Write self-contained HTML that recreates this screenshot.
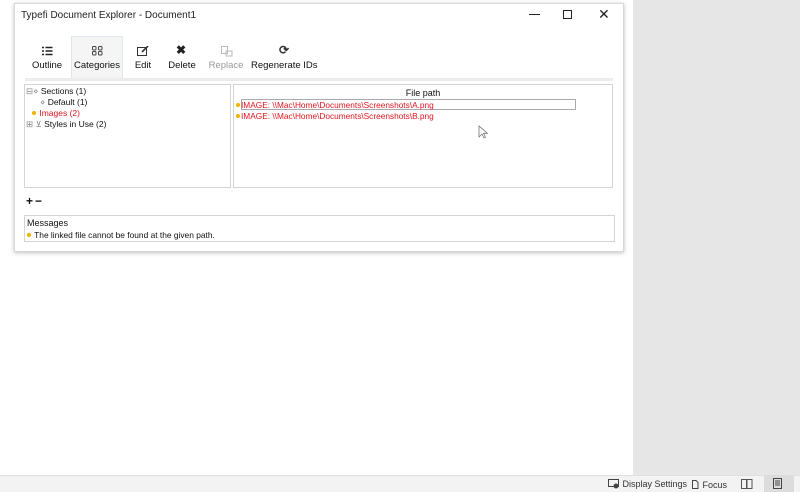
<!DOCTYPE html>
<html><head><meta charset="utf-8"><style>
*{margin:0;padding:0;box-sizing:border-box}
body{width:800px;height:492px;position:relative;overflow:hidden;background:#fff;font-family:"Liberation Sans",sans-serif;font-size:9px;color:#111}
.a{position:absolute}
.dlg{left:14px;top:3px;width:610px;height:249px;background:#fff;border:1px solid #d8d8d8;box-shadow:0 1px 4px rgba(0,0,0,.25)}
.tb{font-size:9.5px;text-align:center;white-space:nowrap}
.red{color:#e0141e}
.dot{display:inline-block;width:4px;height:4px;border-radius:50%;background:#f0b400;margin-right:1px;vertical-align:1px}
</style></head><body>
<div class="a" style="left:633px;top:0;width:167px;height:475px;background:#e6e6e6"></div>
<div class="a" style="left:0;top:475px;width:800px;height:17px;background:#f3f3f3;border-top:1px solid #e0e0e0"></div>
<div class="a" style="left:608px;top:479px;font-size:9px;color:#333;white-space:nowrap">
<svg width="12" height="10" style="vertical-align:-2px"><rect x="0.5" y="0.5" width="10" height="7" fill="none" stroke="#444"/><circle cx="8" cy="7" r="2.5" fill="#444"/></svg> Display Settings</div>
<div class="a" style="left:690px;top:479px;font-size:9px;color:#333">
<svg width="10" height="11" style="vertical-align:-2px"><path d="M2.5 1.5h3.5l2 2v6h-5.5z" fill="none" stroke="#444"/></svg> Focus</div>
<svg class="a" style="left:741px;top:478px" width="12" height="11"><path d="M0.5 1.5h5v9h-5zM6 1.5h5v9h-5z" fill="none" stroke="#555"/></svg>
<div class="a" style="left:764px;top:475px;width:30px;height:17px;background:#dcdcdc"></div>
<svg class="a" style="left:773px;top:478px" width="10" height="12"><rect x="0.5" y="0.5" width="8" height="10" fill="none" stroke="#444"/><path d="M2 3h5M2 5h5M2 7h5" stroke="#444"/></svg>

<div class="a dlg">
 <div class="a" style="left:6px;top:6px;font-size:10px;color:#222">Typefi Document Explorer - Document1</div>
 <div class="a" style="left:514px;top:10px;width:11px;height:1px;background:#222"></div>
 <div class="a" style="left:548px;top:6px;width:9px;height:9px;border:1px solid #222"></div>
 <div class="a" style="left:583px;top:2px;font-size:14px;color:#222">&#10005;</div>

 <div class="a" style="left:56px;top:32px;width:52px;height:44px;background:#f5f5f5;border:1px solid #dfe6ee"></div>
 <svg class="a" style="left:27px;top:42px" width="11" height="10"><path d="M0 1.5h2M0 5h2M0 8.5h2M3.5 1.5h7M3.5 5h7M3.5 8.5h7" stroke="#222" stroke-width="1.4"/></svg>
 <div class="a tb" style="left:16px;top:56px;width:32px">Outline</div>
 <svg class="a" style="left:77px;top:42px" width="11" height="10"><rect x=".5" y=".5" width="3.5" height="3.5" rx="1" fill="none" stroke="#444"/><rect x="6.5" y=".5" width="3.5" height="3.5" rx="1" fill="none" stroke="#444"/><rect x=".5" y="5.5" width="3.5" height="3.5" rx="1" fill="none" stroke="#444"/><rect x="6.5" y="5.5" width="3.5" height="3.5" rx="1" fill="none" stroke="#444"/></svg>
 <div class="a tb" style="left:58px;top:56px;width:48px">Categories</div>
 <svg class="a" style="left:122px;top:42px" width="12" height="10"><rect x=".5" y="1.5" width="9" height="8" fill="none" stroke="#333"/><path d="M5 6l6-6" stroke="#333" stroke-width="1.6"/></svg>
 <div class="a tb" style="left:116px;top:56px;width:24px">Edit</div>
 <div class="a" style="left:161px;top:39px;font-size:12px;font-weight:bold;color:#222">&#10006;</div>
 <div class="a tb" style="left:150px;top:56px;width:34px">Delete</div>
 <svg class="a" style="left:206px;top:42px" width="12" height="11"><rect x=".5" y=".5" width="6" height="7" fill="none" stroke="#bbb"/><path d="M5 5h6v5H5z" fill="none" stroke="#bbb"/></svg>
 <div class="a tb" style="left:193px;top:56px;width:36px;color:#999">Replace</div>
 <div class="a" style="left:264px;top:39px;font-size:12px;font-weight:bold;color:#333">&#10227;</div>
 <div class="a tb" style="left:236px;top:56px;width:66px">Regenerate IDs</div>
 <div class="a" style="left:10px;top:74px;width:588px;height:3px;background:#ececec"></div>

 <div class="a" style="left:9px;top:80px;width:207px;height:104px;border:1px solid #d4d4d4">
  <div class="a" style="left:1px;top:1px;line-height:11px;font-size:8.5px;white-space:nowrap">
   <div><span style="color:#888">&#8863;&#8900;</span> Sections (1)</div>
   <div style="padding-left:14px"><span style="color:#888">&#8900;</span> Default (1)</div>
   <div style="padding-left:6px" class="red"><span class="dot"></span> Images (2)</div>
   <div><span style="color:#888">&#8862; &#8891;</span> Styles in Use (2)</div>
  </div>
 </div>
 <div class="a" style="left:218px;top:80px;width:380px;height:104px;border:1px solid #d4d4d4">
  <div class="a" style="left:0;top:3px;width:378px;text-align:center;font-size:9px">File path</div>
  <div class="a" style="left:7px;top:14px;width:335px;height:11px;border:1px solid #aaa"></div>
  <div class="a red" style="left:2px;top:15px;line-height:11px;font-size:8.3px;white-space:nowrap">
   <div><span class="dot"></span>IMAGE: \\Mac\Home\Documents\Screenshots\A.png</div>
   <div><span class="dot"></span>IMAGE: \\Mac\Home\Documents\Screenshots\B.png</div>
  </div>
  <svg class="a" style="left:244px;top:40px" width="10" height="14"><path d="M1 1v11l3-3 2 4 1.5-.7-2-4h4z" fill="#fff" stroke="#777" stroke-width=".8"/></svg>
 </div>
 <div class="a" style="left:11px;top:190px;font-size:12px;font-weight:bold;letter-spacing:2px">+&#8722;</div>
 <div class="a" style="left:9px;top:211px;width:591px;height:27px;border:1px solid #d4d4d4">
  <div class="a" style="left:2px;top:2px;font-size:9px">Messages</div>
  <div class="a" style="left:2px;top:14px;font-size:8.4px;white-space:nowrap"><span class="dot"></span> The linked file cannot be found at the given path.</div>
 </div>
</div>
</body></html>
